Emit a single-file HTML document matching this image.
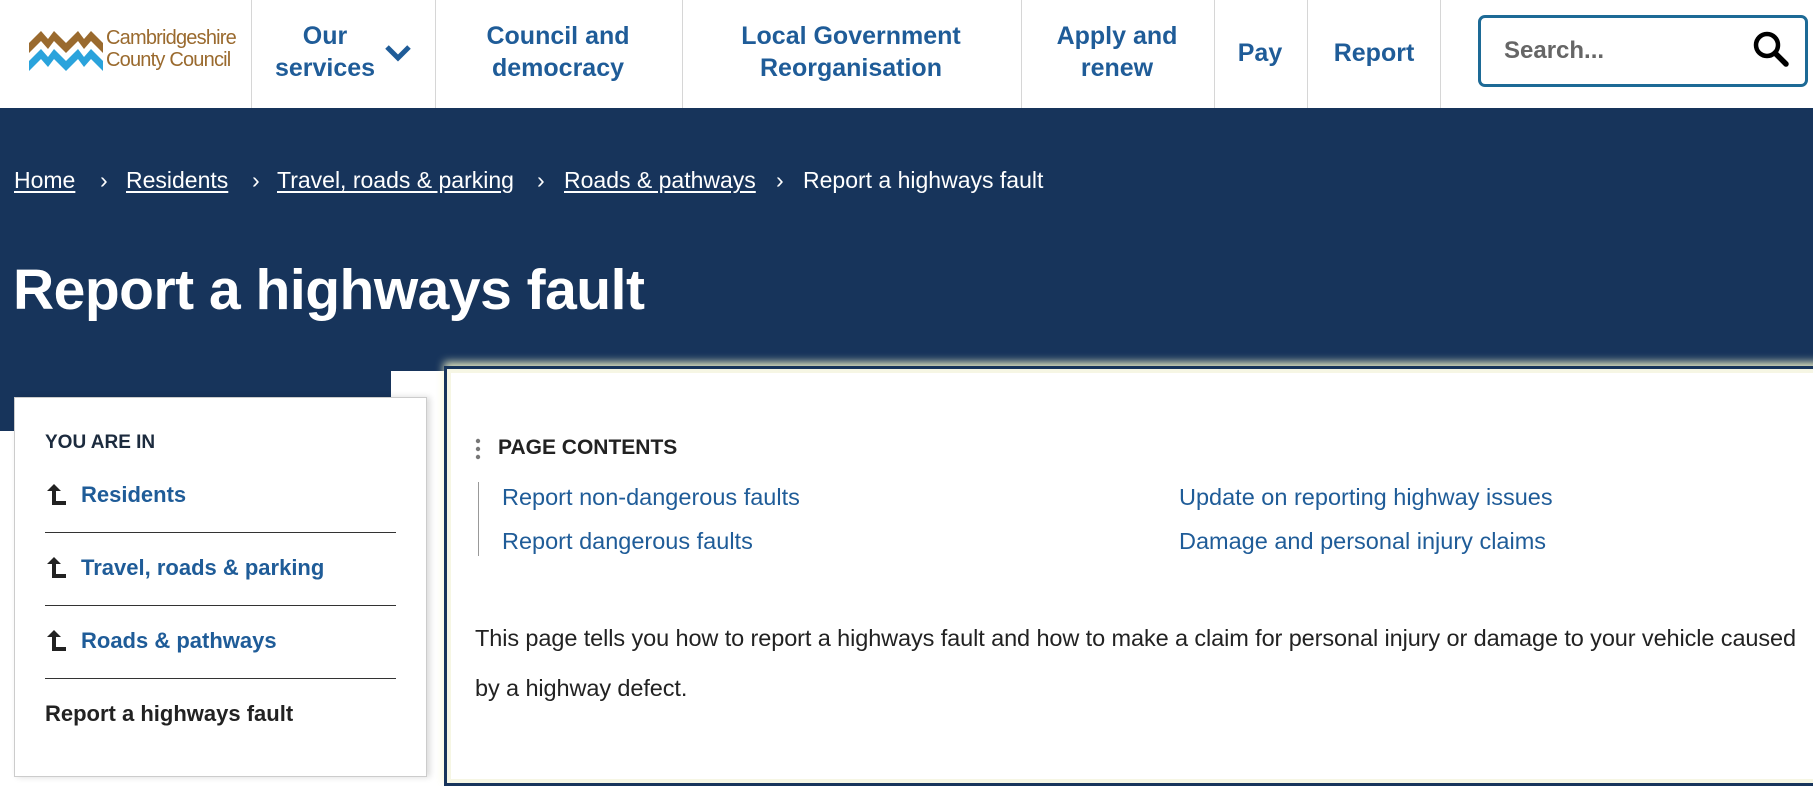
<!DOCTYPE html>
<html><head><meta charset="utf-8"><style>
*{margin:0;padding:0;box-sizing:border-box}
body{width:1813px;height:763px;overflow:hidden;background:#fff;font-family:"Liberation Sans",Arial,sans-serif;position:relative}
.a{position:absolute;white-space:nowrap}
.hdr{position:absolute;left:0;top:0;width:1813px;height:108px;background:#fff}
.div{position:absolute;top:0;width:1px;height:108px;background:#d6d6d6}
.nav{position:absolute;color:#1f5c98;font-weight:bold;font-size:25px;line-height:32px;text-align:center;transform:translateX(-50%)}
.band{position:absolute;left:0;top:108px;width:1813px;height:323px;background:#17345b}
.bc{font-size:23px;color:#fff;top:167px}
.bc u{text-decoration:underline;text-underline-offset:3px}
.side{position:absolute;left:14px;top:397px;width:413px;height:380px;background:#fff;border:1px solid #ccc;box-shadow:3px 0 6px rgba(0,0,0,.15)}
.sl{position:absolute;left:45px;width:351px;height:1px;background:#333}
.link{color:#1f5c98}
.panel{position:absolute;left:444px;top:366px;width:1380px;height:420px;background:#fff;border:3px solid #17345b;box-shadow:inset 0 0 0 4px #f6f6e4,0 -4px 8px rgba(245,245,200,.9)}
.arrow{position:absolute;left:45px}
</style></head><body>
<div class="hdr"></div>
<svg class="a" style="left:29px;top:29px" width="74" height="44" viewBox="0 0 74 44">
<polygon points="0,14 12,2 19,10 25,2 37,14 49,2 55,10 62,2 74,14 74,24 62,12 55,20 49,12 37,24 25,12 19,20 12,12 0,24" fill="#9a6a2e"/>
<polygon points="0,32 12,20 19,28 25,20 37,32 49,20 55,28 62,20 74,32 74,42 62,30 55,38 49,30 37,42 25,30 19,38 12,30 0,42" fill="#2aa3dc"/>
</svg>
<div class="a" style="left:106px;top:27px;font-size:20px;line-height:22px;color:#9a6a2e;letter-spacing:-0.8px">Cambridgeshire<br>County Council</div>
<div class="div" style="left:251px"></div><div class="div" style="left:435px"></div><div class="div" style="left:682px"></div><div class="div" style="left:1021px"></div><div class="div" style="left:1214px"></div><div class="div" style="left:1307px"></div><div class="div" style="left:1440px"></div>
<div class="nav" style="left:325px;top:20px">Our<br>services</div>
<svg class="a" style="left:384px;top:44px" width="28" height="18" viewBox="0 0 28 18"><path d="M3 3 L14 14 L25 3" stroke="#1f5c98" stroke-width="5" fill="none"/></svg>
<div class="nav" style="left:558px;top:20px">Council and<br>democracy</div>
<div class="nav" style="left:851px;top:20px">Local Government<br>Reorganisation</div>
<div class="nav" style="left:1117px;top:20px">Apply and<br>renew</div>
<div class="nav" style="left:1260px;top:37px">Pay</div>
<div class="nav" style="left:1374px;top:37px">Report</div>
<div class="a" style="left:1478px;top:15px;width:330px;height:72px;border:3px solid #1d6a96;border-radius:7px"></div>
<div class="a" style="left:1504px;top:37px;font-size:24px;color:#666;font-weight:bold">Search...</div>
<svg class="a" style="left:1752px;top:30px" width="40" height="40" viewBox="0 0 40 40"><circle cx="15" cy="15" r="11" stroke="#000" stroke-width="4.5" fill="none"/><path d="M23 23 L34 34" stroke="#000" stroke-width="5.5" stroke-linecap="round"/></svg>
<div class="band"></div>
<div class="a bc" style="left:14px"><u>Home</u></div>
<div class="a bc" style="left:100px">›</div>
<div class="a bc" style="left:126px"><u>Residents</u></div>
<div class="a bc" style="left:252px">›</div>
<div class="a bc" style="left:277px"><u>Travel, roads &amp; parking</u></div>
<div class="a bc" style="left:537px">›</div>
<div class="a bc" style="left:564px"><u>Roads &amp; pathways</u></div>
<div class="a bc" style="left:776px">›</div>
<div class="a bc" style="left:803px">Report a highways fault</div>
<div class="a" style="left:13px;top:257px;font-size:57px;font-weight:bold;color:#fff;letter-spacing:-0.5px">Report a highways fault</div>
<div class="a" style="left:391px;top:371px;width:60px;height:400px;background:#fff"></div>
<div class="panel"></div>
<div class="side"></div>
<div class="a" style="left:45px;top:432px;font-size:19px;font-weight:bold;color:#1c2b3e">YOU ARE IN</div>
<svg class="arrow" style="top:483px" width="22" height="24" viewBox="0 0 22 24"><path d="M2 8 L9 1 L16 8 H11 V18 H21 V22 H7 V8 Z" fill="#222"/></svg>
<div class="a link" style="left:81px;top:482px;font-size:22px;font-weight:bold">Residents</div>
<div class="sl" style="top:532px"></div>
<svg class="arrow" style="top:556px" width="22" height="24" viewBox="0 0 22 24"><path d="M2 8 L9 1 L16 8 H11 V18 H21 V22 H7 V8 Z" fill="#222"/></svg>
<div class="a link" style="left:81px;top:555px;font-size:22px;font-weight:bold">Travel, roads &amp; parking</div>
<div class="sl" style="top:605px"></div>
<svg class="arrow" style="top:629px" width="22" height="24" viewBox="0 0 22 24"><path d="M2 8 L9 1 L16 8 H11 V18 H21 V22 H7 V8 Z" fill="#222"/></svg>
<div class="a link" style="left:81px;top:628px;font-size:22px;font-weight:bold">Roads &amp; pathways</div>
<div class="sl" style="top:678px"></div>
<div class="a" style="left:45px;top:701px;font-size:22px;font-weight:bold;color:#222">Report a highways fault</div>
<svg class="a" style="left:475px;top:438px" width="6" height="24"><circle cx="3" cy="3" r="2.2" fill="#777"/><circle cx="3" cy="11" r="2.2" fill="#777"/><circle cx="3" cy="19" r="2.2" fill="#777"/></svg>
<div class="a" style="left:498px;top:436px;font-size:21px;font-weight:bold;color:#222">PAGE CONTENTS</div>
<div class="a" style="left:478px;top:482px;width:1px;height:74px;background:#999"></div>
<div class="a link" style="left:502px;top:484px;font-size:23.5px">Report non-dangerous faults</div>
<div class="a link" style="left:502px;top:528px;font-size:23.5px">Report dangerous faults</div>
<div class="a link" style="left:1179px;top:484px;font-size:23.5px">Update on reporting highway issues</div>
<div class="a link" style="left:1179px;top:528px;font-size:23.5px">Damage and personal injury claims</div>
<div class="a" style="left:475px;top:625px;font-size:23.5px;color:#222;letter-spacing:-0.1px">This page tells you how to report a highways fault and how to make a claim for personal injury or damage to your vehicle caused</div>
<div class="a" style="left:475px;top:675px;font-size:23.5px;color:#222;letter-spacing:-0.1px">by a highway defect.</div>
</body></html>
